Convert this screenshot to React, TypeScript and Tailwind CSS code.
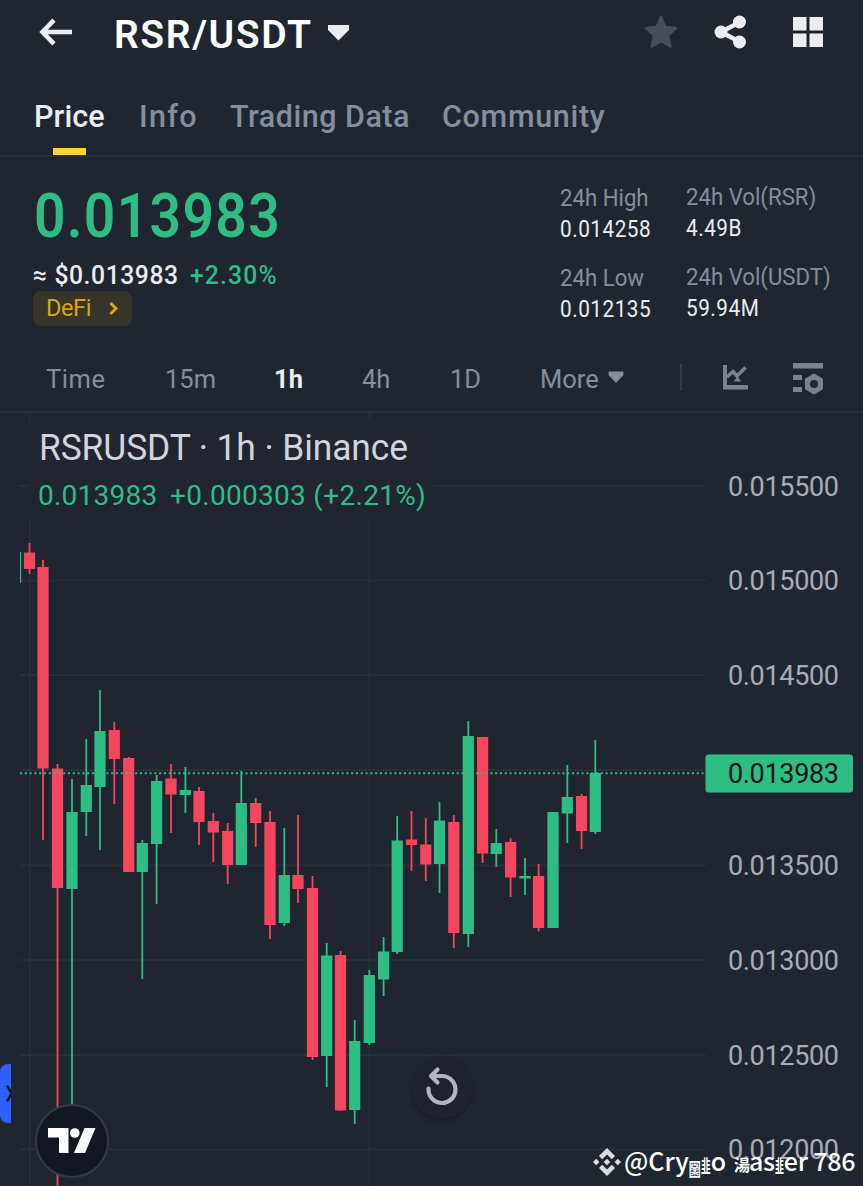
type Candle = [x: number, high: number, low: number, top: number, bottom: number, up: 0 | 1];

const UP = '#2ebd85';
const DOWN = '#f6465d';

const candles: Candle[] = [
  [29.5, 543, 574, 552.5, 569, 0],
  [43, 560, 840, 567, 768.5, 0],
  [57.5, 764, 1186, 768.5, 888, 0],
  [72, 779, 1106, 812, 889, 1],
  [86.3, 739, 836, 785, 812, 1],
  [100, 690, 850, 731, 787, 1],
  [114.3, 722, 804, 730, 759, 0],
  [128.7, 757, 872, 758, 872, 0],
  [142.3, 840, 979, 843, 872, 1],
  [156.6, 775, 904, 781, 844, 1],
  [171, 764, 833, 778.5, 794.5, 0],
  [185.4, 767, 813, 790, 795, 1],
  [199, 787, 845, 791, 822, 0],
  [213.3, 813, 862, 821, 832.5, 0],
  [227.7, 823, 884, 831, 865, 0],
  [241.3, 771, 865, 803, 865, 1],
  [255.7, 798, 847, 803, 823, 0],
  [270, 811, 939, 822, 925, 0],
  [284.3, 828, 926, 875, 923, 1],
  [298, 815, 903, 875, 889, 0],
  [312.5, 876, 1060, 888, 1057, 0],
  [326.7, 943, 1087, 955.5, 1056, 1],
  [340.5, 951, 1111, 955, 1110.5, 0],
  [354.7, 1020, 1124, 1041, 1110, 1],
  [369.3, 970, 1045, 975, 1043, 1],
  [383.6, 937, 996, 951.5, 979.5, 1],
  [397.2, 816, 954, 840.5, 952, 1],
  [411.5, 811, 871, 839.5, 845, 0],
  [425.8, 818, 881, 844.5, 864.5, 0],
  [439.5, 802, 893, 820.5, 864, 1],
  [453.8, 815, 948, 822, 933, 0],
  [468.3, 721, 947, 736, 934, 1],
  [482.6, 737, 863, 737, 853.5, 0],
  [496.3, 829, 867, 843, 854, 1],
  [510.6, 838, 897, 842, 877.5, 0],
  [525, 858, 895, 876, 878.5, 1],
  [538.6, 864, 931.5, 876, 928, 0],
  [553, 812, 928, 812, 928, 1],
  [567.3, 765, 843, 797, 813.5, 1],
  [581.6, 794, 849, 796, 831, 0],
  [595.3, 740, 834, 773, 832, 1],
];

const axis: [string, number][] = [
  ['0.015500', 486],
  ['0.015000', 580.5],
  ['0.014500', 675],
  ['', 770],
  ['0.013500', 865.5],
  ['0.013000', 960],
  ['0.012500', 1055],
  ['0.012000', 1149.5],
];

function Header() {
  return (
    <header className="flex h-[70px] items-center pl-[39px] pr-[40px] pb-[6px]">
      <svg width="34" height="28" viewBox="0 0 34 28" fill="none" stroke="#eaecef" strokeWidth="4.6">
        <path d="M33 14H4M15 2.2 3.5 14 15 25.8" />
      </svg>
      <h1 className="ml-[41px] mt-[6px] w-[196px] whitespace-nowrap text-[39px] font-semibold leading-none tracking-[1.6px] text-white">RSR/USDT</h1>
      <svg className="ml-[18px]" width="21" height="17" viewBox="0 0 21 17" fill="#eaecef">
        <path d="M0 1H21V6L10.5 16.500L0 6Z" />
      </svg>
      <div className="ml-auto flex items-center">
        <svg className="-ml-[1px] mr-[1px]" width="34" height="34" viewBox="0 0 34 34" fill="#474d5a" stroke="#474d5a" strokeWidth="2.500" strokeLinejoin="round">
          <path d="M17 2 21.300 12 32 13 24 20.300 26.400 31.500 17 26 7.600 31.500 10 20.300 2 13 12.700 12Z" />
        </svg>
        <svg className="ml-[35px]" width="33" height="34" viewBox="0 0 33 34" fill="#eaecef">
          <path d="M7 17 26 7M7 17 26 27" stroke="#eaecef" strokeWidth="4.500" />
          <circle cx="7" cy="17" r="6.500" />
          <circle cx="25.500" cy="7" r="6.500" />
          <circle cx="25.500" cy="27" r="6.500" />
        </svg>
        <svg className="ml-[46px]" width="30" height="30" viewBox="0 0 30 30" fill="#eaecef">
          <path d="M0 0H13.500V13.500H0ZM16.500 0H30V13.500H16.500ZM0 16.500H13.500V30H0ZM16.500 16.500H30V30H16.500Z" />
        </svg>
      </div>
    </header>
  );
}

function Tabs() {
  return (
    <nav className="flex h-[87px] items-end border-b-2 border-[#2a303a] pl-[34px] text-[30.5px] font-medium leading-none text-[#848e9c]">
      <div className="flex w-[105px] flex-col">
        <span className="tracking-[0.1px] text-[#eaecef]">Price</span>
        <span className="ml-[19px] mt-[16px] h-[7px] w-[33px] bg-[#fcd535]" />
      </div>
      <span className="w-[91px] pb-[23px] tracking-[1.3px]">Info</span>
      <span className="w-[212px] whitespace-nowrap pb-[23px] tracking-[0.5px]">Trading Data</span>
      <span className="pb-[23px] tracking-[0.7px]">Community</span>
    </nav>
  );
}

function Stat({ label, value }: { label: string; value: string }) {
  return (
    <div className="h-[80px] whitespace-nowrap leading-none">
      <div className="origin-left scale-x-[0.965] text-[23px] text-[#848e9c]">{label}</div>
      <div className="mt-[8px] origin-left scale-x-90 text-[23px] tracking-[0.6px] text-[#eaecef]">{value}</div>
    </div>
  );
}

function Summary() {
  return (
    <section className="flex h-[187px]">
      <div className="w-[560px] pl-[33px] pt-[28px]">
        <div className="ml-[1px] h-[62px] origin-left scale-x-[0.89] text-[62px] font-semibold leading-[62px] tracking-[1.5px] text-[#2ebd85]">0.013983</div>
        <div className="mt-[12px] flex h-[31px] items-center text-[26px] font-medium leading-none">
          <span className="w-[157px] origin-left scale-x-95 whitespace-nowrap tracking-[0.6px] text-[#eaecef]">≈ $0.013983</span>
          <span className="origin-left scale-x-95 tracking-[1.2px] text-[#2ebd85]">+2.30%</span>
        </div>
        <div className="mt-[1px] flex h-[35px] w-[99px] items-center justify-between rounded-lg bg-[#37342c] pl-[13px] pr-[14px] text-[23.5px] leading-none text-[#d9a80f]">
          <span className="tracking-[-0.4px]">DeFi</span>
          <svg width="9" height="13" viewBox="0 0 9 13" fill="none" stroke="#d9a80f" strokeWidth="3">
            <path d="M1.500 1 7 6.500 1.500 12" />
          </svg>
        </div>
      </div>
      <div className="w-[126px] pt-[30px]">
        <Stat label="24h High" value="0.014258" />
        <Stat label="24h Low" value="0.012135" />
      </div>
      <div className="pt-[29px]">
        <Stat label="24h Vol(RSR)" value="4.49B" />
        <Stat label="24h Vol(USDT)" value="59.94M" />
      </div>
    </section>
  );
}

function Intervals() {
  return (
    <div className="flex h-[69px] items-center border-b-2 border-[#2a303a] pl-[46px] pt-[3px] text-[25.5px] leading-none text-[#848e9c]">
      <span className="w-[119px] pt-[2px] tracking-[0.6px]">Time</span>
      <span className="w-[109px] pt-[2px]">15m</span>
      <span className="w-[88px] pt-[2px] font-bold text-[#eaecef]">1h</span>
      <span className="w-[88px] pt-[2px]">4h</span>
      <span className="w-[90px] pt-[2px]">1D</span>
      <span className="w-[68px] pt-[2px]">More</span>
      <svg className="mb-[4px]" width="16" height="12" viewBox="0 0 16 12" fill="#848e9c">
        <path d="M1 1H15V4L8 11.500 1 4Z" stroke="#848e9c" />
      </svg>
      <span className="ml-[56px] mb-[4px] h-[27px] w-[2px] bg-[#363c47]" />
      <svg className="ml-[41px] mb-[4px]" width="25" height="26" viewBox="0 0 25 26" fill="#7b8390">
        <path d="M0 1H4V21H25V25.500H0Z" />
        <path d="M4 13 10 7.500 14 12 22.500 3.500" fill="none" stroke="#7b8390" strokeWidth="3.500" />
        <path d="M14.500 12 18 17.500H10.800Z" />
      </svg>
      <svg className="ml-[44px]" width="32" height="32" viewBox="0 0 32 32" fill="#7b8390">
        <path d="M1 0H31V5.500H1ZM1 12H10V17H1ZM1 24H10V29H1Z" />
        <path fillRule="evenodd" d="M22 10.500 31 15.700V26.300L22 31.500 13 26.300V15.700ZM22 17A4 4 0 1 0 22 25 4 4 0 1 0 22 17Z" />
      </svg>
    </div>
  );
}

function Plot() {
  return (
    <svg className="absolute inset-0" width="863" height="773" viewBox="0 413 863 773">
      <g stroke="#292f39" strokeWidth="1.800">
        {axis.map(([, y]) => (
          <line key={y} x1="20" x2="706" y1={y} y2={y} />
        ))}
        <line x1="29.700" x2="29.700" y1="413" y2="1186" />
        <line x1="369.500" x2="369.500" y1="413" y2="1186" />
      </g>
      <rect x="20" y="552" width="1.200" height="31" fill={UP} />
      {candles.map(([x, high, low, top, bottom, up]) => (
        <g key={x} fill={up ? UP : DOWN}>
          <rect x={x - 0.9} y={high} width="1.800" height={low - high} />
          <rect x={x - 5.6} y={top} width="11.200" height={bottom - top} />
        </g>
      ))}
      <line x1="20" x2="706" y1="773.300" y2="773.300" stroke={UP} strokeWidth="1.900" strokeDasharray="2 2.800" />
      <g className="font-['Roboto']" fontSize="27" fill="#a9acb7">
        {axis.map(([label, y]) => (
          <text key={y} x="728" y={Math.floor(y + 10)} textLength={label ? 111 : undefined}>{label}</text>
        ))}
      </g>
      <rect x="705.500" y="754.500" width="147.500" height="38" rx="3" fill={UP} />
      <text className="font-['Roboto']" x="728" y="783" fontSize="27" textLength="111" fill="#0b1512">0.013983</text>
    </svg>
  );
}

function Legend() {
  return (
    <div className="absolute left-[27px] top-[7px] h-[99px] w-[410px] bg-[#202630]/75 pl-[11px] leading-none">
      <div className="ml-[1px] h-[46px] origin-left scale-x-[0.983] whitespace-nowrap pt-[10px] text-[36px] tracking-[-0.1px] text-[#d1d4dc]">RSRUSDT · 1h · Binance</div>
      <div className="mt-[16px] flex whitespace-nowrap text-[28px] text-[#2ebd85]">
        <span className="w-[132px] tracking-[0.25px]">0.013983</span>
        <span className="tracking-[0.3px]">+0.000303 (+2.21%)</span>
      </div>
    </div>
  );
}

function Watermark() {
  return (
    <div className="absolute left-[593px] top-[732px] flex h-[34px] items-center whitespace-nowrap">
      <svg width="28" height="28" viewBox="0 0 28 28" fill="#dcdcdc">
        <path d="M14 0 22 8 18.800 11.200 14 6.400 9.200 11.200 6 8ZM14 28 22 20 18.800 16.800 14 21.600 9.200 16.800 6 20ZM14 10.700 17.300 14 14 17.300 10.700 14ZM3.200 10.800 6.400 14 3.200 17.200 0 14ZM24.800 10.800 28 14 24.800 17.200 21.600 14Z" />
      </svg>
      <div className="-mt-[3px] ml-[3px] flex items-baseline font-['Noto_Sans_CJK_SC','Noto_Sans',sans-serif] text-[25px] font-medium leading-none text-white">
        <span>@Cry</span>
        <span className="inline-block w-[12px] translate-y-[2px] scale-y-150 text-[12px] font-bold">圞</span>
        <span className="inline-block w-[10px] origin-left -translate-y-[1px] scale-x-[0.8] scale-y-150 text-[12px] font-bold">韭</span>
        <span className="tracking-[-0.2px]">o</span>
        <span className="ml-[8px] w-[15px] text-[16px] font-bold">湯</span>
        <span className="tracking-[-0.3px]">as</span>
        <span className="inline-block w-[9px] origin-left -translate-y-[1px] scale-x-75 scale-y-150 text-[12px] font-bold">韭</span>
        <span className="tracking-[-0.2px]">er 786</span>
      </div>
    </div>
  );
}

export default function App() {
  return (
    <main className="flex h-[1186px] w-[863px] flex-col overflow-hidden bg-[#202630] font-['Roboto',sans-serif]">
      <Header />
      <Tabs />
      <Summary />
      <Intervals />
      <section className="relative h-[773px] overflow-hidden">
        <Plot />
        <Legend />
        <button className="absolute left-0 top-[651px] h-[59px] w-[11px] overflow-hidden rounded-l-lg bg-[#2962ff]" aria-label="Expand">
          <svg width="11" height="59" viewBox="0 0 11 59" fill="none" stroke="#131722" strokeWidth="2.500">
            <path d="M7 21.500 11.500 29.500 7 37.500" />
          </svg>
        </button>
        <div className="absolute left-[35px] top-[691px] flex h-[74px] w-[74px] items-center justify-center rounded-full border-2 border-[#363a45] bg-[#131722]">
          <svg width="48" height="26" viewBox="0 0 48 26" fill="#ffffff">
            <path d="M0 0H20.500V25H11V9.500H0Z" />
            <circle cx="26.800" cy="5" r="4.800" />
            <path d="M36.500 0H47.500L37 25H26Z" />
          </svg>
        </div>
        <div className="absolute left-[411px] top-[643px] flex h-[62px] w-[62px] items-center justify-center rounded-full bg-[#1e222d] shadow-[0_3px_5px_#171b24]">
          <svg width="36" height="42" viewBox="0 0 36 42" fill="none" stroke="#b2b5be" strokeWidth="4.200" strokeLinecap="round" strokeLinejoin="round">
            <path d="M4.500 22.500A13.500 13.500 0 1 0 18 10H8M13.500 3.500 7 10 13.500 16.500" />
          </svg>
        </div>
        <Watermark />
      </section>
    </main>
  );
}
